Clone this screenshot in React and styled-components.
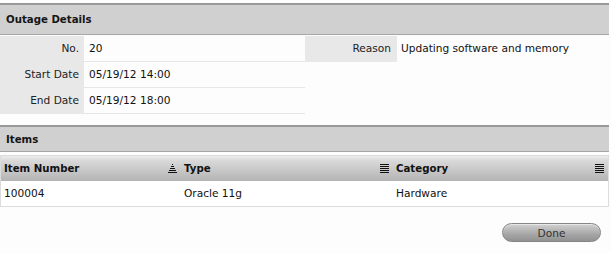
import React from 'react';
import styled, { createGlobalStyle } from 'styled-components';

const GlobalStyle = createGlobalStyle`
  body {
    margin: 0;
    background: #fdfdfd;
    font-family: "DejaVu Sans", Verdana, sans-serif;
    color: #1e1e1e;
  }
`;

const details = {
  left: [
    { label: 'No.', value: '20' },
    { label: 'Start Date', value: '05/19/12 14:00' },
    { label: 'End Date', value: '05/19/12 18:00' },
  ],
  right: [{ label: 'Reason', value: 'Updating software and memory' }],
};

const columns = [
  { title: 'Item Number', width: 180, icon: 'sort' },
  { title: 'Type', width: 212, icon: 'list' },
  { title: 'Category', width: 215, icon: 'list' },
];

const items = [['100004', 'Oracle 11g', 'Hardware']];

const SortIcon = () => (
  <svg width="9" height="9" viewBox="0 0 9 9">
    <g fill="#111">
      <rect x="4" y="0" width="1" height="1" />
      <rect x="3" y="2" width="3" height="1" />
      <rect x="2" y="4" width="5" height="1" />
      <rect x="1" y="6" width="7" height="1" />
      <rect x="0" y="8" width="9" height="1" />
    </g>
  </svg>
);

const ListIcon = () => (
  <svg width="9" height="9" viewBox="0 0 9 9">
    <g fill="#111">
      {[0, 2, 4, 6, 8].map((y) => (
        <rect key={y} x="0" y={y} width="9" height="1" />
      ))}
    </g>
  </svg>
);

const App = () => (
  <>
    <GlobalStyle />
    <Page>
      <Panel>
        <PanelHeader>Outage Details</PanelHeader>
        <DetailGrid>
          <DetailColumn>
            {details.left.map((f) => (
              <FieldRow key={f.label}>
                <FieldLabel $width={84} $padRight={5}>
                  {f.label}
                </FieldLabel>
                <FieldValue $divided $padLeft={5}>
                  {f.value}
                </FieldValue>
              </FieldRow>
            ))}
          </DetailColumn>
          <DetailColumn>
            {details.right.map((f) => (
              <FieldRow key={f.label}>
                <FieldLabel $width={92} $padRight={6}>
                  {f.label}
                </FieldLabel>
                <FieldValue $padLeft={4}>{f.value}</FieldValue>
              </FieldRow>
            ))}
          </DetailColumn>
        </DetailGrid>
      </Panel>

      <Panel $spaced>
        <PanelHeader $small>Items</PanelHeader>
        <Grid>
          <HeaderRow>
            {columns.map((c) => (
              <HeaderCell key={c.title} $width={c.width}>
                <span>{c.title}</span>
                {c.icon === 'sort' ? <SortIcon /> : <ListIcon />}
              </HeaderCell>
            ))}
          </HeaderRow>
          {items.map((row) => (
            <DataRow key={row[0]}>
              {row.map((cell, i) => (
                <DataCell key={i} $width={columns[i].width}>
                  {cell}
                </DataCell>
              ))}
            </DataRow>
          ))}
        </Grid>
      </Panel>

      <Footer>
        <DoneButton type="button">Done</DoneButton>
      </Footer>
    </Page>
  </>
);

// STYLES
const Page = styled.div`
  width: 609px;
  padding-top: 3px;
`;

const Panel = styled.section`
  margin-top: ${({ $spaced }) => ($spaced ? '11px' : '0')};
`;

const PanelHeader = styled.div`
  height: ${({ $small }) => ($small ? '24px' : '29px')};
  display: flex;
  align-items: center;
  padding-left: 6px;
  background: #d0d0d0;
  border-top: 2px solid #999;
  border-bottom: 1px solid #a6a6a6;
  font-size: 10.2px;
  font-weight: bold;
  color: #151515;
`;

const DetailGrid = styled.div`
  display: grid;
  grid-template-columns: 305px 1fr;
  margin-top: 1px;
`;

const DetailColumn = styled.div`
  display: flex;
  flex-direction: column;
`;

const FieldRow = styled.div`
  display: flex;
  height: 26px;
  font-size: 10.6px;
`;

const FieldLabel = styled.div`
  width: ${({ $width }) => $width}px;
  padding-right: ${({ $padRight }) => $padRight}px;
  box-sizing: border-box;
  background: #e8e8e8;
  text-align: right;
  line-height: 25px;
  color: #222;
`;

const FieldValue = styled.div`
  flex: 1;
  padding-left: ${({ $padLeft }) => $padLeft}px;
  line-height: 25px;
  border-bottom: 1px solid ${({ $divided }) => ($divided ? '#e6e6e6' : 'transparent')};
  color: #111;
`;

const Grid = styled.div`
  margin-top: 3px;
  border: 1px solid #dcdcdc;
`;

const HeaderRow = styled.div`
  display: flex;
  height: 25px;
  background: linear-gradient(#ececec 0, #d8d8d8 20%, #b4b4b4 100%);
`;

const HeaderCell = styled.div`
  width: ${({ $width }) => $width}px;
  box-sizing: border-box;
  display: flex;
  align-items: center;
  justify-content: space-between;
  padding: 0 4px 0 3px;
  font-size: 10.2px;
  font-weight: bold;
  color: #111;
`;

const DataRow = styled.div`
  display: flex;
  height: 25px;
  background: #fff;
`;

const DataCell = styled.div`
  width: ${({ $width }) => $width}px;
  box-sizing: border-box;
  padding-left: 3px;
  line-height: 25px;
  font-size: 10.6px;
  color: #111;
`;

const Footer = styled.div`
  display: flex;
  justify-content: flex-end;
  padding: 16px 8px 0 0;
`;

const DoneButton = styled.button`
  width: 99px;
  height: 19px;
  border: 1px solid #858585;
  border-radius: 10px;
  background: linear-gradient(#d2d2d2, #a6a6a6 60%, #929292);
  font-family: "DejaVu Sans", Verdana, sans-serif;
  font-size: 10.6px;
  color: #333;
  padding: 0;
  box-shadow: inset 0 1px 0 rgba(255, 255, 255, 0.5);
`;

export default App;
